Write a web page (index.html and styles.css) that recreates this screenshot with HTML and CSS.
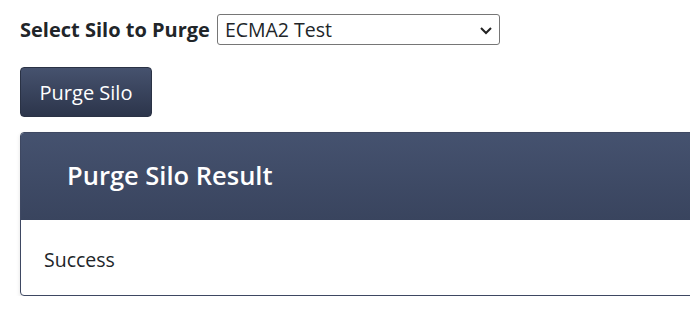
FILE: index.html
```html
<!DOCTYPE html>
<html>
<head>
<meta charset="utf-8">
<link rel="stylesheet" href="styles.css">
</head>
<body>
<div class="page">
  <div class="row">
    <label class="label">Select Silo to Purge</label>
    <div class="select">
      <span class="select-text">ECMA2 Test</span>
      <svg class="chev" width="14" height="10" viewBox="0 0 14 10"><path d="M2 3 L7 8 L12 3" fill="none" stroke="#222" stroke-width="2"/></svg>
    </div>
  </div>
  <button class="btn">Purge Silo</button>
  <div class="card">
    <div class="card-header">Purge Silo Result</div>
    <div class="card-body">Success</div>
  </div>
</div>
</body>
</html>
```
FILE: styles.css
```css
html, body { margin: 0; padding: 0; background: #fff; overflow: hidden; }
body { font-family: "Open Sans", "Noto Sans", sans-serif; color: #212529; }
.page { padding: 14px 0 0 20px; width: 720px; }
.row { display: flex; align-items: center; gap: 7px; height: 31px; }
.label { font-weight: 700; font-size: 20px; color: #212529; white-space: nowrap; }
.select { border: 1px solid #767676; border-radius: 3px; display: flex; align-items: center; justify-content: space-between; padding: 0 6px 0 7px; box-sizing: border-box; width: 283px; height: 31px; font-size: 19.5px; color: #212529; }
.chev { margin-top: 1px; }
.btn { display: block; margin-top: 22px; width: 132px; height: 50px; border: 1px solid #2a3245; border-radius: 4px; background: linear-gradient(#46526e, #2c354b); color: #fff; font-family: inherit; font-size: 20px; padding: 0; }
.card { margin-top: 15px; border: 1px solid #3e4862; border-radius: 4px; box-shadow: 0 2px 4px rgba(0,0,0,0.12); overflow: hidden; }
.card-header { height: 87px; box-sizing: border-box; padding-bottom: 3px; display: flex; align-items: center; padding-left: 46px; background: linear-gradient(#45526f, #39445e); color: #fff; font-size: 25.5px; font-weight: 600; }
.card-body { height: 75px; box-sizing: border-box; padding-top: 4px; display: flex; align-items: center; padding-left: 23px; font-size: 19.5px; color: #212529; }
```
